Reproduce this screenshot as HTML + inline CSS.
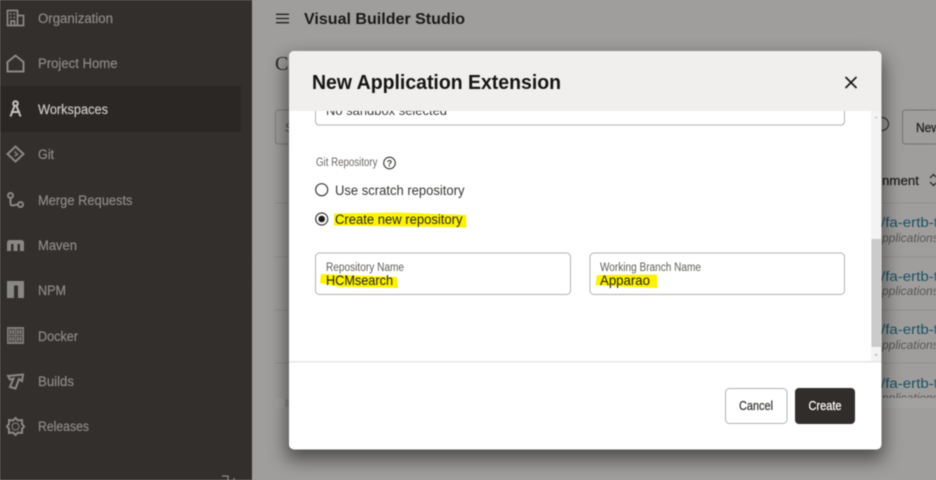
<!DOCTYPE html>
<html lang="en"><head><meta charset="utf-8"><title>New Application Extension</title>
<style>
html,body{margin:0;padding:0;width:936px;height:480px;overflow:hidden;background:#9f9e9c}
svg{display:block;filter:blur(.45px)}
text{font-family:"Liberation Sans",sans-serif}
.n{fill:#8d8b89;font-size:13.5px;stroke:#8d8b89;stroke-width:.2}
.ic{fill:none;stroke:#8a8886;stroke-width:2}
.m{stroke-width:.25}
</style></head><body>
<svg width="936" height="480" viewBox="0 0 936 480" xmlns="http://www.w3.org/2000/svg">
<defs>
<filter id="sh" x="-10%" y="-10%" width="120%" height="125%"><feGaussianBlur stdDeviation="9"/></filter>
<clipPath id="mc"><rect x="289" y="111" width="582" height="250"/></clipPath>
<clipPath id="ro"><rect x="881" y="0" width="55" height="398"/></clipPath>
</defs>
<!-- background -->
<rect width="936" height="480" fill="#9f9e9c"/>
<rect x="0" y="0" width="252" height="480" fill="#322f2c"/>
<g fill="none" stroke="#3d3a37" stroke-width=".6" opacity=".35">
<circle cx="120" cy="385" r="10"/><circle cx="120" cy="385" r="22"/><circle cx="120" cy="385" r="34"/><circle cx="120" cy="385" r="46"/><circle cx="120" cy="385" r="58"/><circle cx="120" cy="385" r="70"/>
<circle cx="190" cy="270" r="15"/><circle cx="190" cy="270" r="30"/><circle cx="190" cy="270" r="45"/><circle cx="190" cy="270" r="60"/>
<circle cx="60" cy="150" r="14"/><circle cx="60" cy="150" r="28"/><circle cx="60" cy="150" r="42"/><circle cx="60" cy="150" r="56"/>
<circle cx="160" cy="40" r="16"/><circle cx="160" cy="40" r="32"/><circle cx="160" cy="40" r="48"/>
</g>
<rect x="0" y="86" width="241" height="46" fill="#2a2725"/>

<!-- sidebar icons -->
<g class="ic">
<path d="M7.500 25.500V10.500H17.500V25.500ZM17.500 15.500H23.500V25.500H17.500M11 25.500V21H14.500V25.500M10 14H11.500M13.500 14H15M10 17.500H11.500M13.500 17.500H15" stroke-width="1.700"/>
<path d="M7.500 71.500V62L15.500 55.500L23.500 62V71.500Z"/>
<g stroke="#c4c2c0"><circle cx="15.500" cy="103.500" r="2.300"/><path d="M14.500 106L10.500 116.500M16.500 106L20.500 116.500M11 112H20"/></g>
<path d="M15.500 146.500L23.500 154L15.500 161.500L7.500 154Z"/>
<path d="M14.500 151.500L17.500 154.500L14.500 156" stroke-width="1.300"/>
<circle cx="10.500" cy="195.500" r="2.500"/><circle cx="20.500" cy="204.500" r="2.500"/><path d="M10.500 198V203C10.500 207 13 205 18 204.500"/>
</g>
<path d="M7 251V243C7 241 8 240 10 240H21C23 240 24 241 24 243V251H20V244H17.500V251H13.500V244H11V251Z" fill="#8a8886"/>
<path d="M7 281H24V298H18V285.500H14V298H7Z" fill="#8a8886"/>
<rect x="7" y="327" width="17" height="17" fill="#807e7c"/>
<g fill="none" stroke="#494643" stroke-width="1"><path d="M9 329.500H14.500V334.500H9ZM16.500 329.500H22V334.500H16.500ZM9 336.500H14.500V341.500H9ZM16.500 336.500H22V341.500H16.500ZM11.750 329.500V334.500M19.250 329.500V334.500M11.750 336.500V341.500M19.250 336.500V341.500"/></g>
<path class="ic" d="M8 376L23 374.500L22 381L19 379L15.500 388.500L10 387L13.500 378.500L10 379.500Z"/>
<path class="ic" d="M15.500 418L18 420.500L22 420L22 424L24 426.500L22 429L22 433L18 432.500L15.500 435L13 432.500L9 433L9 429L7 426.500L9 424L9 420L13 420.500Z" stroke-width="1.800"/>
<circle cx="15.500" cy="426.500" r="3.500" fill="none" stroke="#8a8886" stroke-width="1"/>
<path d="M222 476H228V480M234 478V480" fill="none" stroke="#8a8886" stroke-width="1.300"/>

<!-- sidebar labels -->
<text class="n" x="38" y="23" textLength="75" lengthAdjust="spacingAndGlyphs">Organization</text>
<text class="n" x="38" y="68" textLength="79.500" lengthAdjust="spacingAndGlyphs">Project Home</text>
<text class="n" x="38" y="114" textLength="70" lengthAdjust="spacingAndGlyphs" style="fill:#c9c7c5;stroke:#c9c7c5">Workspaces</text>
<text class="n" x="38" y="159" textLength="16" lengthAdjust="spacingAndGlyphs">Git</text>
<text class="n" x="38" y="205" textLength="94.500" lengthAdjust="spacingAndGlyphs">Merge Requests</text>
<text class="n" x="38" y="250" textLength="39" lengthAdjust="spacingAndGlyphs">Maven</text>
<text class="n" x="38" y="295" textLength="28" lengthAdjust="spacingAndGlyphs">NPM</text>
<text class="n" x="38" y="341" textLength="40" lengthAdjust="spacingAndGlyphs">Docker</text>
<text class="n" x="38" y="386" textLength="36" lengthAdjust="spacingAndGlyphs">Builds</text>
<text class="n" x="38" y="431" textLength="51" lengthAdjust="spacingAndGlyphs">Releases</text>

<!-- app header -->
<path d="M276 14.300H289M276 18.500H289M276 22.700H289" stroke="#22201e" stroke-width="1.300"/>
<text x="304" y="24" textLength="161" lengthAdjust="spacingAndGlyphs" font-size="16" font-weight="700" fill="#1c1a18">Visual Builder Studio</text>
<text x="275" y="70" font-size="20" fill="#2c2a28" style="font-family:'Liberation Serif',serif">Co</text>

<!-- underlying page -->
<rect x="275.500" y="110" width="40" height="34" rx="3" fill="none" stroke="#7d7c7a"/>
<text x="285" y="132" font-size="13" fill="#55534f">S</text>
<path d="M275 203H936M275 256.700H936M275 310H936M275 363H936" stroke="#908f8d" stroke-width="1"/>
<rect x="275" y="398" width="661" height="10" fill="#a3a2a0"/>
<rect x="285" y="399" width="5" height="8" fill="#8f8e8c"/>
<circle cx="882" cy="124" r="6.500" fill="none" stroke="#3a3836" stroke-width="1.200"/>
<rect x="902.500" y="110" width="60" height="34" rx="3" fill="none" stroke="#747371"/>
<text x="916" y="132" font-size="12.500" class="m" stroke="#22201e" fill="#22201e" textLength="24" lengthAdjust="spacingAndGlyphs">New</text>
<text x="882" y="185" font-size="13" class="m" stroke="#22201e" fill="#22201e" textLength="37" lengthAdjust="spacingAndGlyphs">nment</text>
<path d="M930 178L933.500 174.500L937 178M930 182L933.500 185.500L937 182" fill="none" stroke="#22201e" stroke-width="1.200"/>
<g clip-path="url(#ro)">
<g font-size="13.500" fill="#1b5266">
<text x="881" y="227" textLength="57" lengthAdjust="spacingAndGlyphs">/fa-ertb-t</text><text x="881" y="281" textLength="57" lengthAdjust="spacingAndGlyphs">/fa-ertb-t</text><text x="881" y="334" textLength="57" lengthAdjust="spacingAndGlyphs">/fa-ertb-t</text><text x="881" y="388" textLength="57" lengthAdjust="spacingAndGlyphs">/fa-ertb-t</text>
</g>
<g font-size="12" font-style="italic" fill="#5a5856">
<text x="874" y="242">Applications</text><text x="874" y="295">Applications</text><text x="874" y="349">Applications</text><text x="874" y="402">Applications</text>
</g>
</g>

<!-- modal -->
<rect x="286" y="58" width="598" height="402" rx="6" fill="#000" opacity=".5" filter="url(#sh)"/>
<rect x="289" y="51" width="592.500" height="398.500" rx="5" fill="#fff"/>
<g clip-path="url(#mc)">
<rect x="315.500" y="90" width="529" height="35" rx="3.500" fill="#fff" stroke="#b4b2b0" stroke-width="1"/>
<text x="326" y="115" font-size="13" fill="#3a3836" textLength="121" lengthAdjust="spacingAndGlyphs">No sandbox selected</text>
</g>
<path d="M289 111V56A5 5 0 0 1 294 51H876.500A5 5 0 0 1 881.500 56V111Z" fill="#f1efed"/>
<text x="312" y="89" font-size="20" font-weight="700" fill="#161513" textLength="249" lengthAdjust="spacingAndGlyphs">New Application Extension</text>
<path d="M845.500 77L856.500 88M856.500 77L845.500 88" stroke="#161513" stroke-width="1.600"/>

<!-- scrollbar -->
<rect x="871" y="111" width="10.500" height="250" fill="#f3f3f3"/>
<rect x="871.500" y="239" width="9.500" height="108" fill="#cbcbcb"/>
<path d="M874.500 118.500L876.200 116L878 118.500Z" fill="#cfcfcf"/>
<path d="M874.500 354L876.200 356.500L878 354Z" fill="#bdbdbd"/>

<text x="316" y="166" font-size="11.500" fill="#6a6866" textLength="61.500" lengthAdjust="spacingAndGlyphs">Git Repository</text>
<circle cx="389.500" cy="163" r="5.800" fill="none" stroke="#3a3836" stroke-width="1.100"/>
<text x="389.500" y="166.500" font-size="9" font-weight="700" text-anchor="middle" fill="#3a3836">?</text>

<circle cx="321.700" cy="189.700" r="6" fill="#fff" stroke="#3a3836" stroke-width="1.200"/>
<text x="335" y="195" font-size="13.500" fill="#3a3836" textLength="129.500" lengthAdjust="spacingAndGlyphs">Use scratch repository</text>

<path d="M334 213.500L398 212.500L466 215L466.500 227.500L400 226.500L334 225.500Z" fill="#fdf200"/>
<circle cx="321.700" cy="219" r="6" fill="#fff" stroke="#3a3836" stroke-width="1.200"/>
<circle cx="321.700" cy="219" r="3.300" fill="#1c1a18"/>
<text x="335" y="224" font-size="13.500" fill="#2a2826" textLength="127.500" lengthAdjust="spacingAndGlyphs">Create new repository</text>

<rect x="315.500" y="253" width="255" height="41.500" rx="4" fill="#fff" stroke="#b4b2b0" stroke-width="1"/>
<text x="326" y="271" font-size="11.500" fill="#5f5d5b" textLength="78" lengthAdjust="spacingAndGlyphs">Repository Name</text>
<path d="M321 274L397 277L398 288L340 287L320 283Z" fill="#fdf200"/>
<text x="326" y="285" font-size="14" fill="#23211f" textLength="67" lengthAdjust="spacingAndGlyphs">HCMsearch</text>

<rect x="590" y="253" width="254.500" height="41.500" rx="4" fill="#fff" stroke="#b4b2b0" stroke-width="1"/>
<text x="600" y="271" font-size="11.500" fill="#5f5d5b" textLength="101" lengthAdjust="spacingAndGlyphs">Working Branch Name</text>
<path d="M597 275L657 274.500L657.500 288L625 287L595.500 285Z" fill="#fdf200"/>
<text x="600" y="285" font-size="14" fill="#23211f" textLength="50" lengthAdjust="spacingAndGlyphs">Apparao</text>

<!-- footer -->
<rect x="289" y="361" width="592.500" height="1.500" fill="#e6e5e4"/>
<rect x="725.500" y="388.500" width="61.500" height="35" rx="4" fill="#fff" stroke="#b4b2b0" stroke-width="1"/>
<text x="739" y="410" font-size="12.500" class="m" stroke="#3a3836" fill="#3a3836" textLength="34" lengthAdjust="spacingAndGlyphs">Cancel</text>
<rect x="795" y="388" width="60" height="36" rx="4" fill="#312d2a"/>
<text x="808.500" y="410" font-size="12.500" class="m" stroke="#fff" fill="#fff" textLength="33" lengthAdjust="spacingAndGlyphs">Create</text>
</svg>
</body></html>
